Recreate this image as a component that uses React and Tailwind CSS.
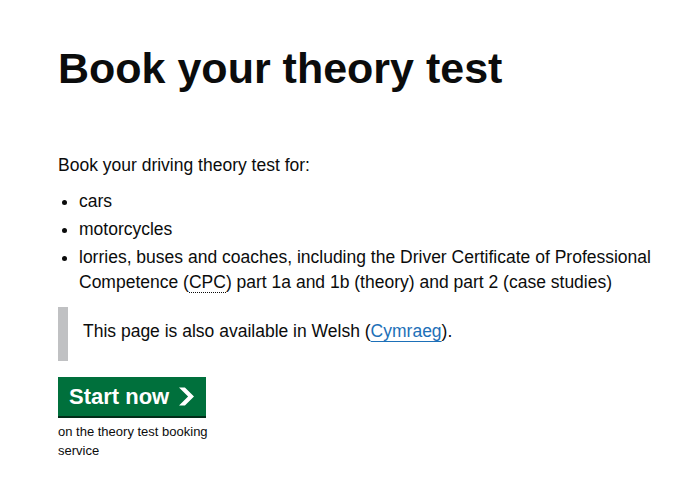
export default function App() {
  return (
    <div className="min-h-[500px] w-[700px] bg-white pl-[58px] pt-[43px] text-[#0b0c0c]" style={{ fontFamily: '"Liberation Sans", Arial, sans-serif' }}>
      <h1 className="text-[43px] font-bold leading-[50px] m-0">Book your theory test</h1>
      <p className="mt-[60px] text-[17.5px] leading-[25px]">Book your driving theory test for:</p>
      <ul className="mt-[11px] list-disc pl-[21px] text-[17.5px] leading-[25px]">
        <li className="mb-[3px]">cars</li>
        <li className="mb-[3px]">motorcycles</li>
        <li>
          lorries, buses and coaches, including the Driver Certificate of Professional Competence (<abbr className="no-underline border-b border-dotted border-[#0b0c0c]" title="Certificate of Professional Competence">CPC</abbr>) part 1a and 1b (theory) and part 2 (case studies)
        </li>
      </ul>
      <div className="mt-[12px] border-l-[10px] border-[#c0c1c3] pl-[15px] pt-[12px] pb-[17px] text-[17.5px] leading-[25px]">
        This page is also available in Welsh (<a href="#" className="text-[#1d70b8] underline decoration-1 underline-offset-[4px]">Cymraeg</a>).
      </div>
      <a href="#" className="mt-[16px] flex h-[39px] w-[148px] items-center gap-[10px] bg-[#00703c] pl-[11px] text-[22px] font-bold text-white shadow-[0_2px_0_#002d18]">
        <span>Start now</span>
        <svg width="15" height="19" viewBox="0 0 33 40" aria-hidden="true">
          <path fill="currentColor" d="M0 0h13l20 20-20 20H0l20-20z" />
        </svg>
      </a>
      <p className="mt-[6px] max-w-[160px] text-[13px] leading-[19px]">on the theory test booking service</p>
    </div>
  );
}
